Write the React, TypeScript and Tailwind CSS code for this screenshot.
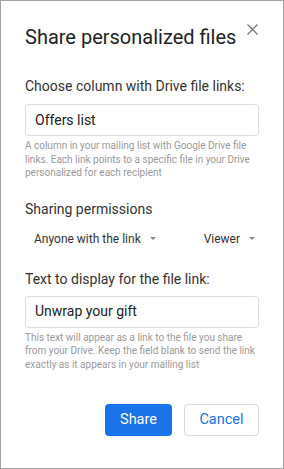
import React from 'react';

const Caret: React.FC = () => (
  <svg width="6" height="3" viewBox="0 0 6 3" className="ml-[9px] fill-[#8a8a8a]">
    <path d="M0 0h6L3 3z" />
  </svg>
);

const Helper: React.FC<{ children: React.ReactNode }> = ({ children }) => (
  <p className="mt-[3px] text-[10px] leading-[13.5px] text-[#9a9a9a]">{children}</p>
);

const App: React.FC = () => {
  return (
    <div className="w-[284px] h-[469px] border border-[#a3a3a3] bg-white font-['Roboto',sans-serif] text-[#202124] overflow-hidden">
      <div className="px-[24px] pt-[24px]">
        <div className="flex items-start justify-between">
          <h1 className="text-[20px] leading-[24px] text-[#222]">Share personalized files</h1>
          <button className="mt-[-1px] mr-[1px] text-[#777]">
            <svg width="11" height="11" viewBox="0 0 11 11" stroke="currentColor" strokeWidth="1.3">
              <path d="M0.5 0.5l10 10M10.5 0.5l-10 10" />
            </svg>
          </button>
        </div>

        <label className="block mt-[27px] text-[14px] leading-[20px] text-[#333]">Choose column with Drive file links:</label>
        <div className="mt-[8px] h-[32px] rounded-[4px] border border-[#dadce0] px-[9px] flex items-center text-[14px] text-[#222]">
          Offers list
        </div>
        <Helper>
          A column in your mailing list with Google Drive file links. Each link points to a specific file in your Drive personalized for each recipient
        </Helper>

        <div className="mt-[19px] text-[14px] leading-[20px] text-[#333]">Sharing permissions</div>
        <div className="mt-[10px] h-[20px] flex items-center justify-between pl-[9px] pr-[4px] text-[12px] text-[#333]">
          <span className="flex items-center">Anyone with the link<Caret /></span>
          <span className="flex items-center">Viewer<Caret /></span>
        </div>

        <label className="block mt-[20px] text-[14px] leading-[20px] text-[#333]">Text to display for the file link:</label>
        <div className="mt-[7px] h-[32px] rounded-[4px] border border-[#dadce0] px-[9px] flex items-center text-[14px] text-[#222]">
          Unwrap your gift
        </div>
        <Helper>
          This text will appear as a link to the file you share from your Drive. Keep the field blank to send the link exactly as it appears in your mailing list
        </Helper>

        <div className="mt-[33px] flex justify-end gap-[12px]">
          <button className="h-[32px] w-[67px] rounded-[4px] bg-[#1a73e8] text-white text-[14.5px]">Share</button>
          <button className="h-[32px] w-[75px] rounded-[4px] border border-[#dadce0] text-[#1a73e8] text-[14.5px]">Cancel</button>
        </div>
      </div>
    </div>
  );
};

export default App;
